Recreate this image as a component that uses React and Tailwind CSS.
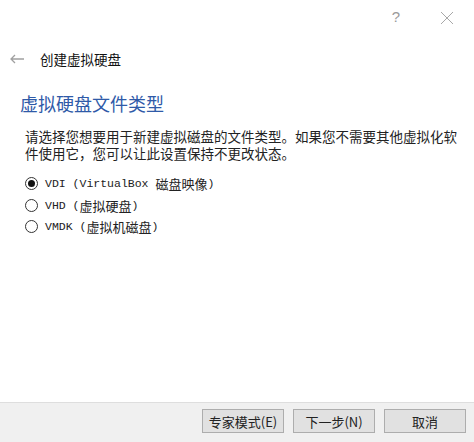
import React from 'react'

const cjk = '"Noto Sans CJK SC", "Noto Sans", sans-serif'
const mono = '"Liberation Mono", monospace'

const options = [
  { latin: 'VDI (VirtualBox ', cn: '磁盘映像', checked: true },
  { latin: 'VHD (', cn: '虚拟硬盘', checked: false },
  { latin: 'VMDK (', cn: '虚拟机磁盘', checked: false },
]

const Radio = ({ checked }) => (
  <span className="w-[13px] h-[13px] rounded-full border border-[#333] bg-white flex items-center justify-center shrink-0">
    {checked && <span className="w-[7px] h-[7px] rounded-full bg-[#111]" />}
  </span>
)

const Btn = ({ children }) => (
  <button className="w-[82px] h-[24px] bg-[#e1e1e1] border border-[#adadad] text-[13px] text-[#222] font-['Noto_Sans_CJK_SC',sans-serif] leading-none">
    {children}
  </button>
)

export default function App() {
  return (
    <div className="w-[474px] h-[442px] bg-white flex flex-col font-['Noto_Sans_CJK_SC',sans-serif]">
      <div className="h-[36px] flex items-center justify-end">
        <span className="text-[15px] text-[#9a9a9a] font-['Liberation_Sans',sans-serif] mr-[40px] pb-[2px]">?</span>
        <svg width="14" height="14" viewBox="0 0 14 14" className="mr-[20px]">
          <path d="M1 1 L13 13 M13 1 L1 13" stroke="#a8a8a8" strokeWidth="1" />
        </svg>
      </div>

      <div className="h-[46px] flex items-center pl-[10px]">
        <svg width="15" height="10" viewBox="0 0 15 10">
          <path d="M1 5 H14 M5 1 L1 5 L5 9" stroke="#a0a0a0" strokeWidth="1.3" fill="none" />
        </svg>
        <span className="ml-[15px] text-[13.5px] text-[#111]" style={{ fontFamily: cjk }}>创建虚拟硬盘</span>
      </div>

      <h1 className="mt-[9px] ml-[20px] h-[24px] leading-[24px] text-[18px] text-[#2f5aa8] font-normal">虚拟硬盘文件类型</h1>

      <p className="mt-[13px] ml-[25px] w-[440px] text-[13.5px] leading-[16.5px] text-[#222]">
        请选择您想要用于新建虚拟磁盘的文件类型。如果您不需要其他虚拟化软件使用它，您可以让此设置保持不更改状态。
      </p>

      <div className="mt-[12px] flex flex-col">
        {options.map((o, i) => (
          <div key={i} className="h-[21.5px] flex items-center pl-[25px]">
            <Radio checked={o.checked} />
            <span className="ml-[7px] text-[#222] flex items-center whitespace-pre">
              <span className="text-[11.5px]" style={{ fontFamily: mono }}>{o.latin}</span>
              <span className="text-[13px]" style={{ fontFamily: cjk }}>{o.cn}</span>
              <span className="text-[11.5px]" style={{ fontFamily: mono }}>)</span>
            </span>
          </div>
        ))}
      </div>

      <div className="mt-auto h-[40px] bg-[#f0f0f0] border-t border-[#dedede] flex items-start justify-end pt-[6px] pr-[8px] gap-[9px]">
        <Btn>专家模式(E)</Btn>
        <Btn>下一步(N)</Btn>
        <Btn>取消</Btn>
      </div>
    </div>
  )
}
